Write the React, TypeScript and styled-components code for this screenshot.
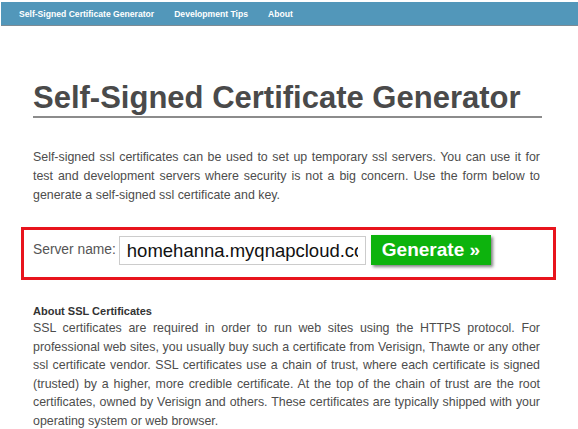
import React from "react";
import styled, { createGlobalStyle } from "styled-components";

const GlobalStyle = createGlobalStyle`
	html, body {
		margin: 0;
		padding: 0;
		background: #ffffff;
	}

	body {
		font-family: "Liberation Sans", Arial, sans-serif;
		padding: 2px 0 0 1px;
	}
`;

const NavBar = styled.nav`
	height: 23px;
	background: #5297ba;
	border-bottom: 1px solid #7d8b94;
	display: flex;
	align-items: center;
	padding-left: 8px;
`;

const NavLink = styled.a`
	color: #ffffff;
	font-size: 8.6px;
	font-weight: bold;
	padding: 0 10px;
	text-decoration: none;
	white-space: nowrap;
`;

const Content = styled.main`
	width: 507px;
	margin-left: 32px;
`;

const Title = styled.h1`
	margin: 54px -2px 0 0;
	font-size: 31px;
	line-height: 36px;
	font-weight: bold;
	color: #4a4a4a;
	border-bottom: 2px solid #8c8c8c;
	white-space: nowrap;
`;

const Text = styled.p<{ $top?: number; $leading?: number }>`
	margin: ${({ $top }) => $top ?? 0}px 0 0;
	font-size: 12.4px;
	line-height: ${({ $leading }) => $leading ?? 19}px;
	color: #4d4d4d;
	text-align: justify;
`;

const FormBox = styled.form`
	display: flex;
	align-items: flex-start;
	width: 535px;
	box-sizing: border-box;
	margin: 22px 0 0 -12px;
	padding: 5px 9px 12px;
	border: 3px solid #e8141d;
`;

const Label = styled.label`
	font-size: 13.8px;
	color: #555555;
	margin: 7px 3px 0 0;
	white-space: nowrap;
`;

const ServerInput = styled.input`
	width: 247px;
	height: 29px;
	box-sizing: border-box;
	margin-top: 1px;
	padding: 0 7px;
	border: 1px solid #cccccc;
	font-family: "Liberation Sans", Arial, sans-serif;
	font-size: 18.5px;
	color: #111111;
	outline: none;
`;

const GenerateButton = styled.button`
	height: 30px;
	margin-left: 5px;
	padding: 0 11px;
	border: none;
	background: #0db30d;
	color: #ffffff;
	font-family: "Liberation Sans", Arial, sans-serif;
	font-size: 19px;
	font-weight: bold;
	box-shadow: 2px 2px 3px rgba(0, 0, 0, 0.5);
	white-space: nowrap;
`;

const SectionHeading = styled.h4`
	margin: 24px 0 0;
	font-size: 11px;
	line-height: 15px;
	font-weight: bold;
	color: #333333;
`;

const App = () => (
	<>
		<GlobalStyle />
		<NavBar>
			<NavLink>Self-Signed Certificate Generator</NavLink>
			<NavLink>Development Tips</NavLink>
			<NavLink>About</NavLink>
		</NavBar>
		<Content>
			<Title>Self-Signed Certificate Generator</Title>
			<Text $top={30}>
				Self-signed ssl certificates can be used to set up temporary ssl
				servers. You can use it for test and development servers where security
				is not a big concern. Use the form below to generate a self-signed ssl
				certificate and key.
			</Text>
			<FormBox onSubmit={(e) => e.preventDefault()}>
				<Label>Server name:</Label>
				<ServerInput readOnly defaultValue="homehanna.myqnapcloud.com" />
				<GenerateButton type="button">Generate »</GenerateButton>
			</FormBox>
			<SectionHeading>About SSL Certificates</SectionHeading>
			<Text $leading={18.5}>
				SSL certificates are required in order to run web sites using the HTTPS
				protocol. For professional web sites, you usually buy such a certificate
				from Verisign, Thawte or any other ssl certificate vendor. SSL
				certificates use a chain of trust, where each certificate is signed
				(trusted) by a higher, more credible certificate. At the top of the
				chain of trust are the root certificates, owned by Verisign and others.
				These certificates are typically shipped with your operating system or
				web browser.
			</Text>
		</Content>
	</>
);

export default App;
